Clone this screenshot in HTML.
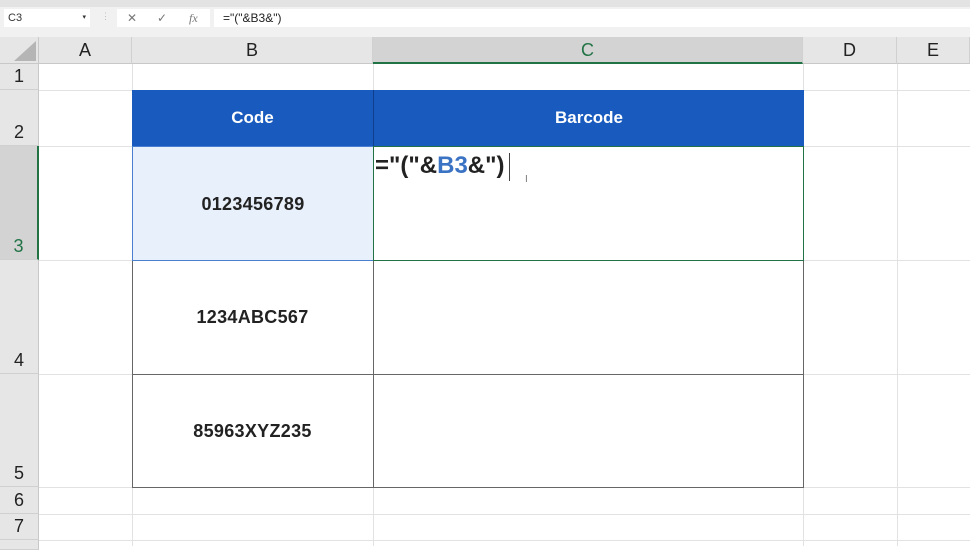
<!DOCTYPE html><html><head><style>
body{margin:0;width:970px;height:546px;overflow:hidden;background:#fff;font-family:"Liberation Sans",sans-serif;position:relative}
div{position:absolute;box-sizing:border-box}
.ch{top:37px;height:27px;background:#e6e6e6;border-right:1px solid #d0d0d0;border-bottom:1px solid #c8c8c8;font-size:18px;color:#222;text-align:center;line-height:27px}
.rh{left:0;width:39px;background:#e6e6e6;border-bottom:1px solid #d0d0d0;border-right:1px solid #c8c8c8;font-size:18px;color:#222;text-align:center}
.rh span{position:absolute;bottom:2px;left:0;width:100%}
.vl{top:64px;bottom:0;width:1px;background:#e2e2e2}
.hl{left:39px;right:0;height:1px;background:#e2e2e2}
.code{font-weight:bold;font-size:18px;color:#222;text-align:center;letter-spacing:0.3px}
</style></head><body>
<div style="left:0;top:0;width:970px;height:37px;background:#f1f1f1"></div>
<div style="left:0;top:0;width:970px;height:7px;background:#e3e3e3"></div>
<div style="left:4px;top:9px;width:86px;height:18px;background:#fff;font-size:11px;line-height:18px;padding-left:4px;color:#333">C3<span style="position:absolute;right:4px;font-size:7px">▾</span></div>
<div style="left:101px;top:11px;font-size:9px;color:#bbb">⋮</div>
<div style="left:117px;top:9px;width:93px;height:18px;background:#fff;font-size:12px;line-height:18px;color:#777"><span style="position:absolute;left:10px">✕</span><span style="position:absolute;left:40px">✓</span><span style="position:absolute;left:72px;font-style:italic;font-family:'Liberation Serif',serif">fx</span></div>
<div style="left:214px;top:9px;width:756px;height:18px;background:#fff;font-size:12px;line-height:18px;padding-left:9px;color:#222">="("&amp;B3&amp;")</div>
<div style="left:0;top:37px;width:39px;height:27px;background:#e6e6e6;border-right:1px solid #c8c8c8;border-bottom:1px solid #c8c8c8"></div>
<div style="left:14px;top:41px;width:0;height:0;border-left:22px solid transparent;border-bottom:20px solid #b5b5b5"></div>
<div class="ch" style="left:39px;width:93px">A</div>
<div class="ch" style="left:132px;width:241px">B</div>
<div class="ch" style="left:373px;width:430px;background:#d3d3d3;border-bottom:2px solid #217346;color:#217346">C</div>
<div class="ch" style="left:803px;width:94px">D</div>
<div class="ch" style="left:897px;width:73px">E</div>
<div class="rh" style="top:64px;height:26px"><span>1</span></div>
<div class="rh" style="top:90px;height:56px"><span>2</span></div>
<div class="rh" style="top:146px;height:114px;background:#d3d3d3;border-right:2px solid #217346;color:#217346"><span>3</span></div>
<div class="rh" style="top:260px;height:114px"><span>4</span></div>
<div class="rh" style="top:374px;height:113px"><span>5</span></div>
<div class="rh" style="top:487px;height:27px"><span>6</span></div>
<div class="rh" style="top:514px;height:26px"><span>7</span></div>
<div class="rh" style="top:540px;height:10px"></div>
<div class="vl" style="left:132px"></div><div class="vl" style="left:373px"></div><div class="vl" style="left:803px"></div><div class="vl" style="left:897px"></div>
<div class="hl" style="top:90px"></div><div class="hl" style="top:146px"></div><div class="hl" style="top:260px"></div><div class="hl" style="top:374px"></div><div class="hl" style="top:487px"></div><div class="hl" style="top:514px"></div><div class="hl" style="top:540px"></div>
<div style="left:132px;top:90px;width:672px;height:56px;background:#185abd;color:#fff;font-weight:bold;font-size:17px;line-height:56px">
<span style="position:absolute;left:0;width:241px;text-align:center">Code</span>
<span style="position:absolute;left:241px;width:1px;height:56px;background:#0f3f8a"></span>
<span style="position:absolute;left:242px;width:430px;text-align:center">Barcode</span></div>
<div style="left:132px;top:146px;width:672px;height:342px;border:1px solid #666"></div>
<div style="left:373px;top:146px;width:1px;height:342px;background:#666"></div>
<div style="left:132px;top:260px;width:672px;height:1px;background:#666"></div>
<div style="left:132px;top:374px;width:672px;height:1px;background:#666"></div>
<div class="code" style="left:132px;top:146px;width:242px;height:115px;background:#e8f0fb;border:1px solid #4a7fcf;line-height:115px">0123456789</div>
<div style="left:373px;top:146px;width:431px;height:115px;border:1.5px solid #217346"></div>
<div style="left:375px;top:152px;font-size:24px;font-weight:bold;color:#222">="("&amp;<span style="color:#3b73c4">B3</span>&amp;")</div>
<div style="left:509px;top:153px;width:1px;height:28px;background:#444"></div>
<div style="left:525px;top:174px;font-size:10px;color:#777">I</div>
<div class="code" style="left:132px;top:261px;width:241px;height:113px;line-height:113px">1234ABC567</div>
<div class="code" style="left:132px;top:375px;width:241px;height:113px;line-height:113px">85963XYZ235</div>
</body></html>
